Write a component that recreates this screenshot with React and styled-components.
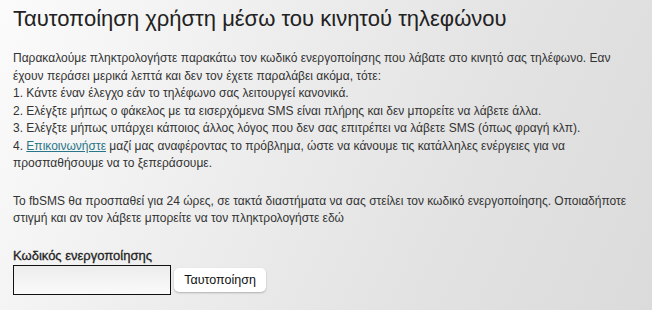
import styled, { createGlobalStyle } from "styled-components";

const GlobalStyle = createGlobalStyle`
  html, body {
    margin: 0;
    padding: 0;
  }
  body {
    font-family: "Liberation Sans", Arial, sans-serif;
  }
`;

export default function App() {
  return (
    <Page>
      <GlobalStyle />
      <Title>Ταυτοποίηση χρήστη μέσω του κινητού τηλεφώνου</Title>
      <Text>
        Παρακαλούμε πληκτρολογήστε παρακάτω τον κωδικό ενεργοποίησης που λάβατε στο κινητό σας
        τηλέφωνο. Εαν έχουν περάσει μερικά λεπτά και δεν τον έχετε παραλάβει ακόμα, τότε:
        <br />
        1. Κάντε έναν έλεγχο εάν το τηλέφωνο σας λειτουργεί κανονικά.
        <br />
        2. Ελέγξτε μήπως ο φάκελος με τα εισερχόμενα SMS είναι πλήρης και δεν μπορείτε να λάβετε άλλα.
        <br />
        3. Ελέγξτε μήπως υπάρχει κάποιος άλλος λόγος που δεν σας επιτρέπει να λάβετε SMS (όπως φραγή κλπ).
        <br />
        4. <Link href="#">Επικοινωνήστε</Link> μαζί μας αναφέροντας το πρόβλημα, ώστε να κάνουμε τις
        κατάλληλες ενέργειες για να προσπαθήσουμε να το ξεπεράσουμε.
      </Text>
      <Text>
        Το fbSMS θα προσπαθεί για 24 ώρες, σε τακτά διαστήματα να σας στείλει τον κωδικό
        ενεργοποίησης. Οποιαδήποτε στιγμή και αν τον λάβετε μπορείτε να τον πληκτρολογήστε εδώ
      </Text>
      <Form>
        <Label htmlFor="code">Κωδικός ενεργοποίησης</Label>
        <Row>
          <CodeInput id="code" type="text" />
          <Button type="button">Ταυτοποίηση</Button>
        </Row>
      </Form>
    </Page>
  );
}

const Page = styled.div`
  box-sizing: border-box;
  width: 652px;
  height: 310px;
  padding: 4px 13px 0 13px;
  overflow: hidden;
  background: linear-gradient(115deg, #fbfbfb 0%, #eeeeee 35%, #e2e2e2 70%, #dbdbdb 100%);
  color: #333333;
`;

const Title = styled.h1`
  margin: 0 0 16px 0;
  font-size: 22px;
  line-height: 30px;
  font-weight: normal;
  color: #222222;
`;

const Text = styled.p`
  margin: 0 0 20px 0;
  font-size: 12px;
  line-height: 17.5px;
  color: #333333;
`;

const Link = styled.a`
  color: #2a7689;
  text-decoration: underline;
`;

const Form = styled.div`
  display: flex;
  flex-direction: column;
  margin-top: 18px;
`;

const Label = styled.label`
  font-size: 13px;
  font-weight: normal;
  color: #1e1e1e;
  line-height: 15px;
  margin-bottom: 2px;
  -webkit-text-stroke: 0.3px #1e1e1e;
`;

const Row = styled.div`
  display: flex;
  align-items: center;
  gap: 3px;
`;

const CodeInput = styled.input`
  box-sizing: border-box;
  width: 158px;
  height: 30px;
  margin: 0;
  padding: 2px 4px;
  border: 1px solid #111111;
  background: linear-gradient(to bottom, #ececec, #fafafa);
  font-family: inherit;
  font-size: 12px;
  outline: none;
`;

const Button = styled.button`
  box-sizing: border-box;
  width: 92px;
  height: 24px;
  margin: 0;
  padding: 0;
  border: none;
  border-radius: 5px;
  background: #ffffff;
  box-shadow: 0 1px 2px rgba(0, 0, 0, 0.25);
  font-family: inherit;
  font-size: 12.5px;
  color: #111111;
  cursor: pointer;
`;
